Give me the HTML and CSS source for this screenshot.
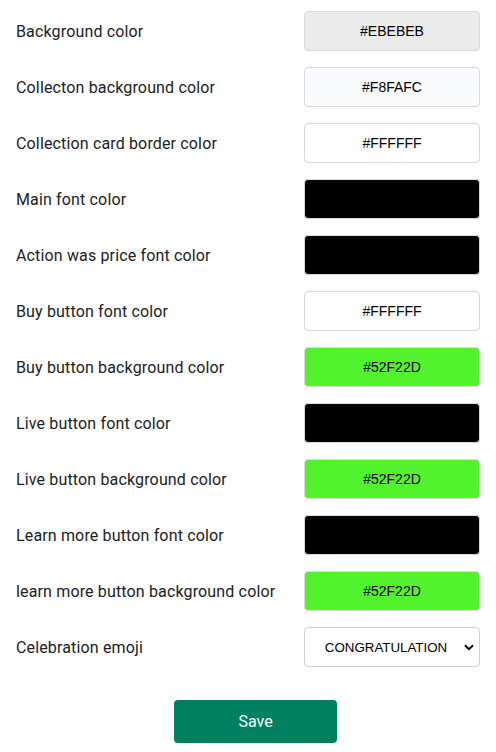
FILE: index.html
```html
<!DOCTYPE html>
<html>
<head>
<meta charset="utf-8">
<link rel="stylesheet" href="styles.css">
</head>
<body>
<div class="settings">
  <div class="row"><span class="label">Background color</span><div class="swatch" style="background:#EBEBEB">#EBEBEB</div></div>
  <div class="row"><span class="label">Collecton background color</span><div class="swatch" style="background:#F8FAFC">#F8FAFC</div></div>
  <div class="row"><span class="label">Collection card border color</span><div class="swatch" style="background:#FFFFFF">#FFFFFF</div></div>
  <div class="row"><span class="label">Main font color</span><div class="swatch dark" style="background:#000000">#000000</div></div>
  <div class="row"><span class="label">Action was price font color</span><div class="swatch dark" style="background:#000000">#000000</div></div>
  <div class="row"><span class="label">Buy button font color</span><div class="swatch" style="background:#FFFFFF">#FFFFFF</div></div>
  <div class="row"><span class="label">Buy button background color</span><div class="swatch" style="background:#52F22D">#52F22D</div></div>
  <div class="row"><span class="label">Live button font color</span><div class="swatch dark" style="background:#000000">#000000</div></div>
  <div class="row"><span class="label">Live button background color</span><div class="swatch" style="background:#52F22D">#52F22D</div></div>
  <div class="row"><span class="label">Learn more button font color</span><div class="swatch dark" style="background:#000000">#000000</div></div>
  <div class="row"><span class="label">learn more button background color</span><div class="swatch" style="background:#52F22D">#52F22D</div></div>
  <div class="row"><span class="label">Celebration emoji</span>
    <div class="select-wrap">
      <select class="select"><option>CONGRATULATION</option></select>
      <svg class="chevron" width="10" height="7" viewBox="0 0 10 7"><path d="M1 1.2 L5 5.2 L9 1.2" fill="none" stroke="#000" stroke-width="2"/></svg>
    </div>
  </div>
  <div class="actions"><button class="save">Save</button></div>
</div>
</body>
</html>
```
FILE: styles.css
```css
* { box-sizing: border-box; }
html, body { margin: 0; padding: 0; background: #fff; }
body { font-family: Roboto, "Noto Sans", sans-serif; color: #202223; }
.settings {
  display: flex;
  flex-direction: column;
  gap: 16px;
  padding: 11px 16px 0 16px;
}
.row {
  display: flex;
  align-items: center;
  justify-content: space-between;
  height: 40px;
}
.label {
  font-size: 16px;
  letter-spacing: 0.15px;
  color: #202223;
}
.swatch {
  width: 176px;
  height: 40px;
  border: 1px solid #d9d9d9;
  border-radius: 4px;
  display: flex;
  align-items: center;
  justify-content: center;
  font-family: "Liberation Sans", Arial, sans-serif;
  font-size: 14px;
  color: #000;
}
.swatch.dark { color: #000; }
.select-wrap {
  position: relative;
  width: 176px;
  height: 40px;
}
.select {
  appearance: none;
  -webkit-appearance: none;
  width: 100%;
  height: 100%;
  border: 1px solid #d2d2d2;
  border-radius: 4px;
  background: #fff;
  font-family: "Liberation Sans", Arial, sans-serif;
  font-size: 13.33px;
  color: #000;
  padding: 0 12px 0 0;
  text-align: center;
  text-align-last: center;
}
.chevron {
  position: absolute;
  right: 6px;
  top: 17px;
  pointer-events: none;
}
.actions {
  display: flex;
  justify-content: center;
  padding: 17px 0 0 15px;
}
.save {
  width: 163px;
  height: 43px;
  border: none;
  border-radius: 4px;
  background: #008060;
  color: #fff;
  font-family: Roboto, "Noto Sans", sans-serif;
  font-size: 16px;
}
```
